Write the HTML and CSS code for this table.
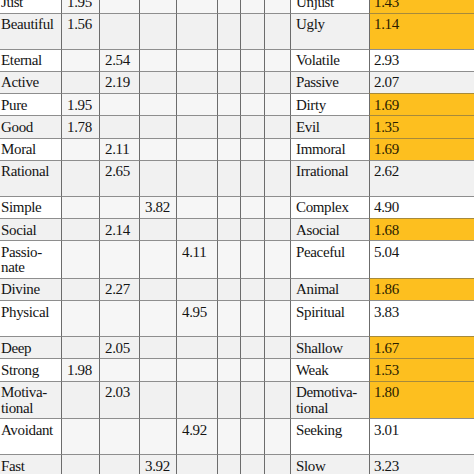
FILE: index.html
```html
<!DOCTYPE html>
<html lang="en">
<head>
<meta charset="utf-8">
<title>Semantic ratings</title>
<link rel="stylesheet" href="styles.css">
</head>
<body>
<div class="sheet">
  <div class="row"><div class="c lab">Just</div><div class="c mid">1.95</div><div class="c mid"></div><div class="c mid"></div><div class="c mid"></div><div class="c mid"></div><div class="c mid"></div><div class="c mid"></div><div class="c lab">Unjust</div><div class="c val hi">1.43</div></div>
  <div class="row alt tall"><div class="c lab">Beautiful</div><div class="c mid">1.56</div><div class="c mid"></div><div class="c mid"></div><div class="c mid"></div><div class="c mid"></div><div class="c mid"></div><div class="c mid"></div><div class="c lab">Ugly</div><div class="c val hi">1.14</div></div>
  <div class="row"><div class="c lab">Eternal</div><div class="c mid"></div><div class="c mid">2.54</div><div class="c mid"></div><div class="c mid"></div><div class="c mid"></div><div class="c mid"></div><div class="c mid"></div><div class="c lab">Volatile</div><div class="c val">2.93</div></div>
  <div class="row alt"><div class="c lab">Active</div><div class="c mid"></div><div class="c mid">2.19</div><div class="c mid"></div><div class="c mid"></div><div class="c mid"></div><div class="c mid"></div><div class="c mid"></div><div class="c lab">Passive</div><div class="c val">2.07</div></div>
  <div class="row"><div class="c lab">Pure</div><div class="c mid">1.95</div><div class="c mid"></div><div class="c mid"></div><div class="c mid"></div><div class="c mid"></div><div class="c mid"></div><div class="c mid"></div><div class="c lab">Dirty</div><div class="c val hi">1.69</div></div>
  <div class="row alt"><div class="c lab">Good</div><div class="c mid">1.78</div><div class="c mid"></div><div class="c mid"></div><div class="c mid"></div><div class="c mid"></div><div class="c mid"></div><div class="c mid"></div><div class="c lab">Evil</div><div class="c val hi">1.35</div></div>
  <div class="row"><div class="c lab">Moral</div><div class="c mid"></div><div class="c mid">2.11</div><div class="c mid"></div><div class="c mid"></div><div class="c mid"></div><div class="c mid"></div><div class="c mid"></div><div class="c lab">Immoral</div><div class="c val hi">1.69</div></div>
  <div class="row alt tall"><div class="c lab">Rational</div><div class="c mid"></div><div class="c mid">2.65</div><div class="c mid"></div><div class="c mid"></div><div class="c mid"></div><div class="c mid"></div><div class="c mid"></div><div class="c lab">Irrational</div><div class="c val">2.62</div></div>
  <div class="row"><div class="c lab">Simple</div><div class="c mid"></div><div class="c mid"></div><div class="c mid">3.82</div><div class="c mid"></div><div class="c mid"></div><div class="c mid"></div><div class="c mid"></div><div class="c lab">Complex</div><div class="c val">4.90</div></div>
  <div class="row alt"><div class="c lab">Social</div><div class="c mid"></div><div class="c mid">2.14</div><div class="c mid"></div><div class="c mid"></div><div class="c mid"></div><div class="c mid"></div><div class="c mid"></div><div class="c lab">Asocial</div><div class="c val hi">1.68</div></div>
  <div class="row"><div class="c lab">Passio-<br>nate</div><div class="c mid"></div><div class="c mid"></div><div class="c mid"></div><div class="c mid">4.11</div><div class="c mid"></div><div class="c mid"></div><div class="c mid"></div><div class="c lab">Peaceful</div><div class="c val">5.04</div></div>
  <div class="row alt"><div class="c lab">Divine</div><div class="c mid"></div><div class="c mid">2.27</div><div class="c mid"></div><div class="c mid"></div><div class="c mid"></div><div class="c mid"></div><div class="c mid"></div><div class="c lab">Animal</div><div class="c val hi">1.86</div></div>
  <div class="row tall"><div class="c lab">Physical</div><div class="c mid"></div><div class="c mid"></div><div class="c mid"></div><div class="c mid">4.95</div><div class="c mid"></div><div class="c mid"></div><div class="c mid"></div><div class="c lab">Spiritual</div><div class="c val">3.83</div></div>
  <div class="row alt"><div class="c lab">Deep</div><div class="c mid"></div><div class="c mid">2.05</div><div class="c mid"></div><div class="c mid"></div><div class="c mid"></div><div class="c mid"></div><div class="c mid"></div><div class="c lab">Shallow</div><div class="c val hi">1.67</div></div>
  <div class="row"><div class="c lab">Strong</div><div class="c mid">1.98</div><div class="c mid"></div><div class="c mid"></div><div class="c mid"></div><div class="c mid"></div><div class="c mid"></div><div class="c mid"></div><div class="c lab">Weak</div><div class="c val hi">1.53</div></div>
  <div class="row alt"><div class="c lab">Motiva-<br>tional</div><div class="c mid"></div><div class="c mid">2.03</div><div class="c mid"></div><div class="c mid"></div><div class="c mid"></div><div class="c mid"></div><div class="c mid"></div><div class="c lab">Demotiva-<br>tional</div><div class="c val hi">1.80</div></div>
  <div class="row tall"><div class="c lab">Avoidant</div><div class="c mid"></div><div class="c mid"></div><div class="c mid"></div><div class="c mid">4.92</div><div class="c mid"></div><div class="c mid"></div><div class="c mid"></div><div class="c lab">Seeking</div><div class="c val">3.01</div></div>
  <div class="row alt"><div class="c lab">Fast</div><div class="c mid"></div><div class="c mid"></div><div class="c mid">3.92</div><div class="c mid"></div><div class="c mid"></div><div class="c mid"></div><div class="c mid"></div><div class="c lab">Slow</div><div class="c val">3.23</div></div>
</div>
</body>
</html>
```
FILE: styles.css
```css
html, body {
  margin: 0;
  padding: 0;
  background: #ffffff;
  overflow: hidden;
}

.sheet {
  display: grid;
  grid-template-columns: 66px 38px 40px 37px 41px 23px 24px 26px 79px 111px;
  margin: -9.5px 0 0 -5px;
  width: 485px;
  font-family: "Liberation Serif", "Times New Roman", serif;
  font-size: 15px;
  letter-spacing: -0.35px;
  line-height: 15.4px;
  color: #141414;
}

.row {
  display: contents;
}

.c {
  box-sizing: border-box;
  padding: 3.45px 4px 2.45px 5px;
  border-top: 1px solid #8e8e8e;
  border-left: 1px solid #6c6c6c;
  background: #ffffff;
  white-space: nowrap;
}

.mid {
  background: #f6f6f6;
}

.row.alt .c {
  background: #f1f1f1;
}

.row.tall .c {
  min-height: 35.8px;
}

.val {
  padding-left: 4px;
}

.row .c.hi {
  background: #fdbf1f;
  color: #2a1c00;
  border-top-color: #a68a3c;
}
```
